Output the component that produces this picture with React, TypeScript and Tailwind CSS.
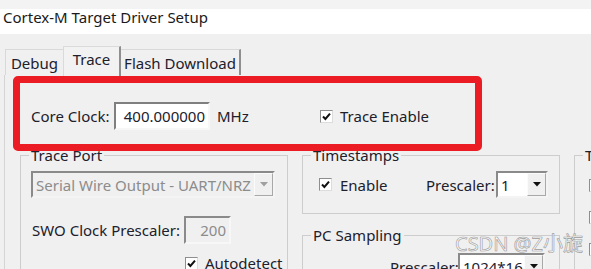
import React from "react";

function Check({ disabled = false }: { disabled?: boolean }) {
  return (
    <span className="inline-flex h-[13px] w-[13px] shrink-0 items-center justify-center border border-[#8e8e8e] border-r-[#dcdcdc] border-b-[#dcdcdc] bg-white">
      <svg width="9" height="9" viewBox="0 0 9 9">
        <path d="M1 4.5 L3.4 7 L8 1.6" fill="none" stroke={disabled ? "#888" : "#111"} strokeWidth="2" />
      </svg>
    </span>
  );
}

function Arrow({ color = "#111" }: { color?: string }) {
  return (
    <svg width="8" height="5" viewBox="0 0 8 5">
      <path d="M0 0 H8 L4 4.5 Z" fill={color} />
    </svg>
  );
}

function Select({ value, w, disabled = false }: { value: string; w: string; disabled?: boolean }) {
  return (
    <div
      className={`flex h-[27px] ${w} shrink-0 items-stretch border-2 border-[#f4f4f4] border-t-[#8a8a8a] border-l-[#8a8a8a] ${disabled ? "bg-[#f0f0f0] text-[#8c8c8c]" : "bg-white text-[#222230]"}`}
    >
      <div className="flex flex-1 items-center overflow-hidden whitespace-nowrap pl-[3px] leading-[16px]">{value}</div>
      <div className="flex w-[19px] items-center justify-center border border-[#fbfbfb] border-r-[#a8a8a8] border-b-[#a8a8a8] bg-[#f0f0f0]">
        <Arrow color={disabled ? "#a0a0a0" : "#111"} />
      </div>
    </div>
  );
}

export default function App() {
  return (
    <div className="relative h-[269px] w-[591px] overflow-hidden bg-[#f0f0f0] font-['Noto_Sans',sans-serif] text-[15px] leading-[16px] text-[#20202c]">
      <div className="h-[9px] bg-[#f3f3f3]" />
      <div className="h-[25px] bg-white pl-[3px] text-[#1a1a1a]">Cortex-M Target Driver Setup</div>

      {/* tabs */}
      <div className="flex h-[41px] items-end pl-[5px]">
        <div className="h-[26px] w-[58px] border-l border-t border-[#d9d9d9] pt-[5px] text-center">Debug</div>
        <div className="relative z-10 -mb-[1px] h-[30px] w-[58px] border-l border-t border-r-2 border-[#dadada] border-r-[#8f8f8f] bg-[#f2f2f2] pt-[4px] text-center">
          Trace
        </div>
        <div className="h-[26px] w-[120px] whitespace-nowrap border-t border-r-2 border-[#d9d9d9] border-r-[#8f8f8f] pt-[5px] text-center">
          Flash Download
        </div>
      </div>

      {/* panel */}
      <div className="ml-[4px] h-[200px] border-l border-[#d4d4d4]">
        <div className="pl-[8px] pt-[1px]">
          <div className="h-[75px] w-[469px] rounded-[5px] border-[7px] border-[#ec1c24]">
            <div className="mt-[19px] flex h-[28px] items-center pl-[11px]">
              <span className="w-[83px] whitespace-nowrap">Core Clock:</span>
              <div className="flex h-[28px] w-[96px] items-center justify-end border-2 border-[#f7f7f7] border-t-[#7f7f7f] border-l-[#7f7f7f] bg-white pr-[3px]">
                400.000000
              </div>
              <span className="ml-[7px] w-[103px]">MHz</span>
              <Check />
              <span className="ml-[7px]">Trace Enable</span>
            </div>
          </div>
        </div>

        <div className="-mt-[4px] flex gap-[14px] pl-[15px]">
          {/* Trace Port */}
          <fieldset className="h-[130px] w-[268px] min-w-0 shrink-0 border border-[#cdcdcd] px-[8px]">
            <legend className="px-[2px] leading-[16px]">Trace Port</legend>
            <div className="pl-[2px]">
              <div className="mt-[8px]">
                <Select value="Serial Wire Output - UART/NRZ" w="w-[244px]" disabled />
              </div>
              <div className="mt-[18px] flex h-[28px] items-center pl-[1px]">
                <span className="w-[152px] shrink-0 whitespace-nowrap">SWO Clock Prescaler:</span>
                <div className="flex h-[28px] w-[47px] items-center justify-end border-2 border-[#f7f7f7] border-t-[#8a8a8a] border-l-[#8a8a8a] pr-[3px] text-[#8c8c8c]">
                  200
                </div>
              </div>
              <div className="mt-[11px] flex items-center whitespace-nowrap pl-[154px]">
                <Check />
                <span className="ml-[7px]">Autodetect</span>
              </div>
            </div>
          </fieldset>

          {/* middle column */}
          <div className="flex w-[258px] min-w-0 shrink-0 flex-col">
            <fieldset className="h-[67px] min-w-0 border border-[#cdcdcd] px-[8px]">
              <legend className="px-[2px] leading-[16px]">Timestamps</legend>
              <div className="mt-[8px] flex h-[27px] items-center pl-[8px]">
                <Check />
                <span className="ml-[8px] w-[86px]">Enable</span>
                <span className="w-[70px] whitespace-nowrap">Prescaler:</span>
                <Select value="1" w="w-[52px]" />
              </div>
            </fieldset>
            <fieldset className="mt-[13px] h-[60px] min-w-0 border border-[#cdcdcd] px-[8px]">
              <legend className="px-[2px] leading-[16px]">PC Sampling</legend>
              <div className="mt-[10px] flex h-[27px] items-center pl-[79px]">
                <span className="w-[68px] whitespace-nowrap">Prescaler:</span>
                <Select value="1024*16" w="w-[87px]" />
              </div>
            </fieldset>
          </div>

          {/* right column */}
          <fieldset className="h-[130px] w-[120px] min-w-0 shrink-0 border border-[#cdcdcd] px-[8px]">
            <legend className="whitespace-nowrap px-[2px] leading-[16px]">Trace Events</legend>
            <div className="mt-[16px] flex flex-col gap-[19px] pl-[6px]">
              <Check />
              <Check />
              <Check />
            </div>
          </fieldset>
        </div>
      </div>

      <div className="absolute left-[455px] top-[232px] whitespace-nowrap font-['Noto_Sans','Noto_Sans_CJK_SC',sans-serif] text-[20px] leading-[24px] text-white/70 [-webkit-text-stroke:0.6px_#9a9a9a]">
        CSDN @Z小旋
      </div>
    </div>
  );
}
